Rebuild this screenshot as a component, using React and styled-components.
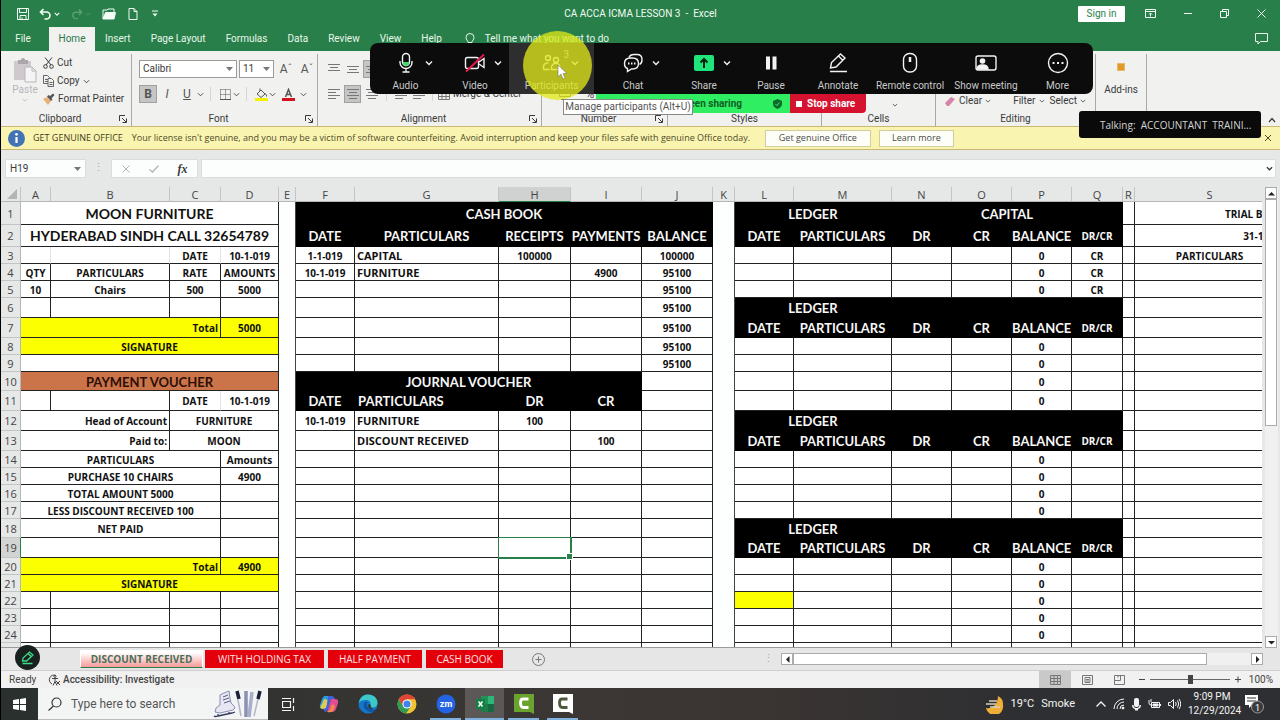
import React from 'react';
import styled, { createGlobalStyle, css } from 'styled-components';

const GlobalStyle = createGlobalStyle`
  * {
    box-sizing: border-box;
  }
  body {
    margin: 0;
    background: #000;
    overflow: hidden;
  }
  button, input, select {
    font: inherit;
    color: inherit;
    margin: 0;
    padding: 0;
    border: 0;
    background: none;
    border-radius: 0;
    outline: none;
  }
`;

const ui = "Roboto, 'Open Sans', sans-serif";
const wideUi = "'Open Sans', 'Noto Sans', sans-serif";

const Screen = styled.div`
  position: relative;
  display: flex;
  flex-direction: column;
  height: 100vh;
  padding-left: 1px;
  font-family: ${ui};
  font-size: 10px;
  line-height: 14px;
  color: #3a3a3a;
  overflow: hidden;
  white-space: nowrap;
`;

const Icon = styled.svg`
  display: block;
  flex: none;
  fill: none;
  stroke: ${p => p.stroke || 'currentColor'};
  stroke-width: ${p => p.$stroke || 1};
`;

/* title bar */

const TitleBar = styled.header`
  display: grid;
  grid-template-columns: 1fr auto 1fr;
  align-items: center;
  height: 27px;
  background: #287f49;
  color: #f2fbf4;
`;

const QuickAccess = styled.div`
  display: flex;
  align-items: center;
  padding-left: 15px;
`;

const QuickButton = styled.button`
  display: flex;
  align-items: center;
  justify-content: center;
  gap: 2px;
  width: ${p => p.$w}px;
  opacity: ${p => (p.$faint ? 0.25 : 1)};
`;

const WindowButtons = styled.div`
  display: flex;
  align-items: center;
  justify-content: flex-end;
`;

const SignIn = styled.button`
  width: 47px;
  height: 16px;
  margin-right: 7px;
  background: #fff;
  color: #287f49;
  border-radius: 1px;
`;

const WindowButton = styled.button`
  display: flex;
  align-items: center;
  justify-content: center;
  width: 37px;
  height: 24px;
`;

const TabRow = styled.nav`
  display: flex;
  align-items: stretch;
  height: 24px;
  background: #287f49;
  color: #e9f7ec;
`;

const Tab = styled.button`
  padding: 0 10px;
`;

const FileTab = styled(Tab)`
  width: 48px;
  padding: 0 4px 0 0;
`;

const ActiveTab = styled(Tab)`
  width: 46px;
  padding: 0;
  background: #f1f1f0;
  color: #2b7a4b;
`;

const TellMe = styled.label`
  display: flex;
  align-items: center;
  gap: 10px;
  flex: 1;
  padding-left: 13px;
`;

/* ribbon */

const Ribbon = styled.div`
  display: flex;
  height: 75px;
  padding-top: 3px;
  background: #f1f1f0;
`;

const Group = styled.section`
  display: flex;
  flex-direction: column;
  width: ${p => p.$w}px;
  border-right: 1px solid #a9a9a9;
`;

const GroupBody = styled.div`
  flex: 1;
  display: flex;
  min-height: 0;
`;

const GroupFoot = styled.div`
  display: flex;
  align-items: center;
  height: 14px;
  span {
    flex: 1;
    text-align: center;
  }
`;

const Launcher = styled.button`
  width: 12px;
  display: flex;
`;

const PasteButton = styled.button`
  display: flex;
  flex: none;
  flex-direction: column;
  align-items: center;
  width: 42px;
  padding: 3px 0 0 6px;
  color: #b9b5b8;
`;

const Stack = styled.div`
  display: flex;
  flex-direction: column;
  gap: 4px;
  padding-top: 2px;
`;

const LineButton = styled.button`
  display: flex;
  align-items: center;
  gap: 3px;
  height: 14px;
`;

const ToolRows = styled.div`
  display: flex;
  flex-direction: column;
  gap: 7px;
  padding: 6px 0 0 7px;
`;

const ToolRow = styled.div`
  display: flex;
  align-items: center;
  height: 18px;
  gap: ${p => p.$gap || 0}px;
`;

const SelectBox = styled.label`
  position: relative;
  display: flex;
  align-items: center;
  width: ${p => p.$w}px;
  height: 18px;
  background: #fff;
  border: 1px solid #9b9b9b;
  select {
    appearance: none;
    width: 100%;
    padding-left: 3px;
  }
  svg {
    position: absolute;
    right: 3px;
    pointer-events: none;
  }
`;

const Tool = styled.button`
  display: flex;
  align-items: center;
  justify-content: center;
  width: ${p => p.$w || 16}px;
  height: 18px;
  font-size: 12px;
  color: #555;
  ${p => p.$on && css`
    background: #c5c5c5;
    border: 1px solid #a0a0a0;
  `}
`;

const ToolDivider = styled.span`
  width: 1px;
  height: 14px;
  margin: 0 ${p => p.$m || 6}px;
  background: #d5d5d5;
`;

const LowRow = styled.div`
  display: flex;
  align-items: flex-end;
  justify-content: ${p => p.$justify || 'center'};
  gap: ${p => p.$gap || 8}px;
  width: 100%;
  padding: 0 ${p => p.$pad || 0}px 4px;
`;

const AddIns = styled.button`
  display: flex;
  flex-direction: column;
  align-items: center;
  width: 100%;
  gap: 12px;
  padding-top: 9px;
`;

const AddInMark = styled.span`
  width: 8px;
  height: 8px;
  background: #e09a2c;
  border: 1px solid #eab968;
`;

const CollapseRibbon = styled.button`
  margin: auto 4px 3px auto;
`;

/* message bar */

const MessageBar = styled.div`
  display: flex;
  align-items: center;
  height: 24px;
  padding: 0 8px 0 7px;
  background: #f9f4b0;
  border-top: 1px solid #c9b873;
  border-bottom: 1px solid #c9b873;
  color: #4f4b28;
  font-family: ${wideUi};
  font-size: 9px;
  strong {
    font-weight: 400;
    margin: 0 9px 0 8px;
    color: #3f3c20;
  }
  p {
    width: 625px;
    margin: 0;
  }
`;

const MessageButton = styled.button`
  width: ${p => p.$w}px;
  height: 17px;
  margin-left: 8px;
  background: #fefef8;
  border: 1px solid #d2cd9d;
  color: #4a4a4a;
`;

const CloseMessage = styled.button`
  margin-left: auto;
`;

/* formula bar */

const FormulaBar = styled.div`
  display: flex;
  align-items: flex-start;
  height: 37px;
  padding: 9px 4px 0 4px;
  background: #e6e7e7;
`;

const NameBox = styled.label`
  display: flex;
  align-items: center;
  width: 81px;
  height: 19px;
  background: #fcfdfd;
  border: 1px solid #dcdcdc;
  input {
    width: 60px;
    padding-left: 4px;
  }
  svg {
    margin-left: auto;
    margin-right: 4px;
  }
`;

const Dots = styled.span`
  width: 25px;
  text-align: center;
  font-size: 11px;
  line-height: 18px;
  color: #aaa;
`;

const FormulaTools = styled.div`
  display: flex;
  align-items: center;
  justify-content: space-around;
  width: 87px;
  height: 19px;
  background: #fcfdfd;
  border: 1px solid #dcdcdc;
`;

const FormulaField = styled.label`
  flex: 1;
  display: flex;
  align-items: center;
  height: 19px;
  margin-left: 3px;
  padding-right: 2px;
  background: #fcfdfd;
  border: 1px solid #dcdcdc;
  input {
    flex: 1;
  }
`;

const FxButton = styled.button`
  font-family: 'Liberation Serif', serif;
  font-style: italic;
  font-weight: 700;
  font-size: 12px;
`;

/* sheet */

const SheetArea = styled.div`
  flex: 1;
  display: flex;
  min-height: 0;
  background: #e6e7e7;
`;

const SheetView = styled.div`
  flex: 1;
  min-width: 0;
  overflow: hidden;
  border-bottom: 1px solid #9a9a9a;
`;

const Sheet = styled.table`
  table-layout: fixed;
  width: 0;
  border-collapse: separate;
  border-spacing: 0;
  background: #fff;
  font-family: ${wideUi};
  font-size: 10px;
  line-height: 14px;
  font-weight: 700;
  color: #111;
`;

const ColumnHead = styled.th`
  height: 15px;
  padding: 0;
  line-height: 13px;
  font-weight: 400;
  font-size: 11px;
  color: #444;
  background: ${p => (p.$active ? '#cfd2d0' : '#e6e7e7')};
  border-right: 1px solid #c3c4c4;
  border-bottom: 1px solid ${p => (p.$active ? '#287f49' : '#b5b6b6')};
`;

const RowHead = styled.th`
  padding: 1px 0 0;
  font-weight: 400;
  font-size: 11px;
  color: #444;
  background: ${p => (p.$active ? '#d2d4d3' : '#e6e7e7')};
  border-right: 1px solid ${p => (p.$active ? '#287f49' : '#b5b6b6')};
  border-bottom: 1px solid #c3c4c4;
`;

const tones = {
  plain: css`background: #fff;`,
  black: css`background: #000; color: #f7f7f7; border-color: #000;`,
  yellow: css`background: #fbff00;`,
  clay: css`background: #cb744a; color: #2b0f06;`,
};

const sizes = { title: 14, head: 13, mid: 11, small: 10 };

const Cell = styled.td`
  position: relative;
  padding: 1px ${p => (p.$pad === undefined ? 2 : p.$pad)}px 0;
  text-align: ${p => p.$align || 'center'};
  font-family: ${p => (p.$size === 'title' || p.$size === 'head' ? "Lato, 'Open Sans', sans-serif" : 'inherit')};
  font-size: ${p => sizes[p.$size || 'small']}px;
  border-right: 1px solid ${p => (p.$soft ? '#e3e3e3' : '#222')};
  border-bottom: 1px solid #222;
  ${p => tones[p.$tone || 'plain']}
  ${p => p.$selected && css`
    z-index: 1;
    outline: 1px solid #287f49;
    border-color: #287f49;
    &::after {
      content: '';
      position: absolute;
      right: -3px;
      bottom: -3px;
      width: 5px;
      height: 5px;
      background: #287f49;
      border: 1px solid #fff;
    }
  `}
`;

const GapCell = styled.td`
  padding: 0;
  background: #fdfefe;
  border-right: 1px solid #444;
`;

const ScrollColumn = styled.div`
  display: flex;
  flex-direction: column;
  width: 13px;
  margin: 0 2px 0 3px;
  background: #f0f0f0;
`;

const ArrowButton = styled.button`
  display: flex;
  align-items: center;
  justify-content: center;
  width: 12px;
  height: 12px;
  background: #fff;
  border: 1px solid #ababab;
`;

const VerticalThumb = styled.div`
  width: 12px;
  height: 227px;
  background: #fff;
  border: 1px solid #ababab;
`;

const Spacer = styled.span`
  flex: 1;
`;

/* sheet tabs */

const TabStrip = styled.div`
  display: flex;
  align-items: center;
  height: 23px;
  padding: 0 17px 0 79px;
  background: #e6e6e6;
  border-bottom: 1px solid #cfcfcf;
`;

const SheetTab = styled.button`
  height: 18px;
  width: ${p => p.$w}px;
  margin-right: 4px;
  font-family: ${wideUi};
  background: #e3000b;
  color: #ffe1e1;
  ${p => p.$active && css`
    margin-right: 2px;
    font-weight: 700;
    color: #4b7057;
    background: linear-gradient(#fff 10%, #f79a9a);
    border: 1px solid #fff;
    border-bottom: 1px solid #287f49;
  `}
`;

const AddSheet = styled.button`
  margin-left: 25px;
`;

const HorizontalScroll = styled.div`
  display: flex;
  width: 482px;
  background: #f0f0f0;
`;

const HorizontalThumb = styled.div`
  width: 414px;
  height: 12px;
  background: #fff;
  border: 1px solid #ababab;
`;

/* status bar */

const StatusBar = styled.div`
  display: flex;
  align-items: center;
  height: 17px;
  padding: 0 7px 0 8px;
  background: #f1f1f1;
  color: #444;
  b {
    margin-left: 2px;
    font-weight: 500;
  }
`;

const Ready = styled.span`
  width: 39px;
`;

const ViewButton = styled.button`
  display: flex;
  align-items: center;
  justify-content: center;
  width: 32px;
  height: 17px;
  background: ${p => (p.$on ? '#c9c9c9' : 'none')};
`;

const ZoomSlider = styled.input`
  appearance: none;
  width: 80px;
  height: 12px;
  margin: 0 4px;
  background: linear-gradient(#666, #666) center / 100% 1px no-repeat;
  &::-webkit-slider-thumb {
    appearance: none;
    width: 5px;
    height: 9px;
    background: #444;
  }
`;

const Percent = styled.span`
  width: 32px;
  text-align: right;
`;

/* task bar */

const TaskBar = styled.footer`
  display: flex;
  align-items: stretch;
  height: 32px;
  background: linear-gradient(90deg, #2a302d, #3c3735 45%, #3a3432 60%, #2e2f32 80%);
  color: #f4f4f4;
`;

const StartButton = styled.button`
  display: flex;
  align-items: center;
  justify-content: center;
  width: 37px;
`;

const SearchBox = styled.label`
  display: flex;
  align-items: center;
  width: 230px;
  padding-left: 10px;
  background: #f3f4f4;
  border-bottom: 1px solid #bbb;
  color: #333;
  input {
    width: 142px;
    margin-left: 9px;
    font-size: 12px;
    &::placeholder {
      color: #555;
    }
  }
`;

const TaskButton = styled.button`
  position: relative;
  display: flex;
  align-items: center;
  justify-content: center;
  width: ${p => p.$w || 39}px;
  background: ${p => (p.$active ? '#5b5857' : 'none')};
  ${p => p.$open && css`
    &::after {
      content: '';
      position: absolute;
      bottom: 0;
      left: ${p.$active ? 0 : 4}px;
      right: ${p.$active ? 0 : 4}px;
      height: 2px;
      background: #7fb1de;
    }
  `}
`;

const Weather = styled.div`
  display: flex;
  align-items: center;
  gap: 7px;
  margin-left: auto;
  margin-right: 21px;
  font-size: 11px;
`;

const Tray = styled.div`
  display: flex;
  align-items: center;
  gap: 7px;
`;

const Clock = styled.div`
  width: 48px;
  text-align: center;
`;

const Notifications = styled.button`
  display: flex;
  align-items: center;
  margin: 0 16px 0 8px;
`;

/* meeting overlays */

const MeetingBar = styled.div`
  position: absolute;
  top: 43px;
  left: 370px;
  display: grid;
  grid-template-columns: 71px 68px 85px 78px 64px 70px 64px 80px 72px 71px;
  height: 51px;
  background: #0c0c0c;
  border-radius: 8px;
  overflow: hidden;
  z-index: 3;
`;

const MeetingButton = styled.button`
  position: relative;
  display: flex;
  flex-direction: column;
  align-items: center;
  gap: 4px;
  padding-top: 8px;
  color: #c9c9c9;
  background: ${p => (p.$hover ? '#2e2e2e' : 'none')};
`;

const MeetingIcon = styled.span`
  display: grid;
  grid-template-columns: 1fr auto 1fr;
  align-items: center;
  width: 100%;
  height: 24px;
  color: #f3f3f3;
  > :first-child {
    grid-column: 2;
  }
  > :nth-child(2) {
    margin-left: 7px;
  }
`;

const Count = styled.span`
  position: absolute;
  top: 5px;
  right: 25px;
`;

const Spotlight = styled.div`
  position: absolute;
  top: 31px;
  left: 523px;
  width: 69px;
  height: 69px;
  border-radius: 50%;
  background: rgba(225, 233, 24, 0.76);
  z-index: 4;
`;

const Pointer = styled.svg`
  position: absolute;
  top: 64px;
  left: 557px;
  z-index: 6;
`;

const Tooltip = styled.div`
  position: absolute;
  top: 99px;
  left: 563px;
  width: 130px;
  height: 16px;
  text-align: center;
  background: #fff;
  border: 1px solid #888;
  color: #555;
  z-index: 5;
`;

const ShareStatus = styled.div`
  position: absolute;
  top: 94px;
  left: 596px;
  display: flex;
  width: 270px;
  height: 19px;
  font-weight: 700;
  z-index: 2;
`;

const SharingLabel = styled.div`
  flex: 1;
  display: flex;
  align-items: center;
  justify-content: flex-end;
  gap: 31px;
  padding-right: 8px;
  background: #2fee62;
  color: #0e5f26;
`;

const StopShare = styled.button`
  display: flex;
  align-items: center;
  gap: 5px;
  width: 76px;
  padding-left: 6px;
  background: #d5122f;
  color: #fff;
  border-radius: 0 0 4px 0;
  &::before {
    content: '';
    width: 6px;
    height: 6px;
    background: #fff;
  }
`;

const Talking = styled.div`
  position: absolute;
  top: 111px;
  right: 19px;
  width: 182px;
  height: 27px;
  padding-left: 21px;
  line-height: 28px;
  background: #0a0a0a;
  border-radius: 3px;
  color: #d4d4d4;
  font-family: ${wideUi};
  z-index: 3;
`;

const PenBubble = styled.button`
  position: absolute;
  left: 15px;
  bottom: 50px;
  display: flex;
  align-items: center;
  justify-content: center;
  width: 25px;
  height: 25px;
  border-radius: 50%;
  background: #18211d;
  color: #3ddb88;
  z-index: 3;
`;

const Chevron = ({ size = 7, stroke = 1 }) => (
  <Icon width={size} height={size} viewBox="0 0 8 8" $stroke={stroke}>
    <path d="M1 2.5 4 5.5 7 2.5" />
  </Icon>
);

const Caret = () => (
  <Icon width="7" height="4" viewBox="0 0 7 4" stroke="none">
    <path d="M0 0h7L3.500 4z" fill="#777" />
  </Icon>
);

const arrowPaths = {
  up: 'M0 5.500h7L3.500 2z',
  down: 'M0 2h7L3.500 5.500z',
  left: 'M5.500 0v7L2 3.500z',
  right: 'M2 0v7L5.500 3.500z',
};

const Arrow = ({ to }) => (
  <ArrowButton aria-label={`Scroll ${to}`}>
    <Icon width="7" height="7" viewBox="0 0 7 7" stroke="none">
      <path d={arrowPaths[to]} fill="#222" />
    </Icon>
  </ArrowButton>
);

const LauncherIcon = () => (
  <Launcher aria-label="More options">
    <Icon width="8" height="8" viewBox="0 0 8 8">
      <path d="M.5 6V.5H6M3 3l4 4M7.500 3.500v4h-4" />
    </Icon>
  </Launcher>
);

const Lines = ({ widths = [12, 8, 12, 8], center, short }) => (
  <Icon width="12" height="12" viewBox="0 0 12 12" stroke="#777">
    {widths.map((w, i) => {
      const x = center ? (12 - w) / 2 : 0;
      return <path key={i} d={`M${x} ${(short ? 3.5 : 1.5) + i * 3}h${w}`} />;
    })}
  </Icon>
);

/* sheet data: [text, options] per cell, "span" merges columns */

const columns = [
  ['A', 30], ['B', 119], ['C', 51], ['D', 58], ['E', 17], ['F', 59], ['G', 144], ['H', 72], ['I', 71],
  ['J', 71], ['K', 22], ['L', 59], ['M', 98], ['N', 60], ['O', 60], ['P', 60], ['Q', 51], ['R', 12],
  ['S', 150], ['T', 108],
];

const heights = [23, 22, 17, 17, 17, 20, 20, 17, 17, 19, 20, 20, 20, 17, 17, 17, 17, 19, 20, 17, 17, 17, 17, 17, 17];

const blanks = (n, options) => Array.from({ length: n }, () => ['', options]);
const soft = { soft: true };
const yellow = { tone: 'yellow' };
const head = { tone: 'black', size: 'head', pad: 0 };
const leftText = { align: 'left', size: 'mid' };

const voucher = {
  1: [['MOON FURNITURE', { span: 4, size: 'title' }]],
  2: [['HYDERABAD SINDH CALL 32654789', { span: 4, size: 'title', pad: 0 }]],
  3: [['', soft], ['', soft], ['DATE', soft], ['10-1-019']],
  4: [['QTY'], ['PARTICULARS'], ['RATE'], ['AMOUNTS', { pad: 0 }]],
  5: [['10'], ['Chairs'], ['500'], ['5000']],
  7: [['Total', { ...yellow, span: 3, align: 'right' }], ['5000', yellow]],
  8: [['SIGNATURE', { ...yellow, span: 4 }]],
  9: [['', { span: 4 }]],
  10: [['PAYMENT VOUCHER', { tone: 'clay', span: 4, size: 'head' }]],
  11: [[''], [''], ['DATE', soft], ['10-1-019']],
  12: [['Head of Account', { span: 2, align: 'right' }], ['FURNITURE', { span: 2 }]],
  13: [['Paid to:', { span: 2, align: 'right' }], ['MOON', { span: 2 }]],
  14: [['PARTICULARS', { span: 3 }], ['Amounts']],
  15: [['PURCHASE 10 CHAIRS', { span: 3 }], ['4900']],
  16: [['TOTAL AMOUNT 5000', { span: 3 }], ['']],
  17: [['LESS DISCOUNT RECEIVED 100', { span: 3 }], ['']],
  18: [['NET PAID', { span: 3 }], ['']],
  19: [['', { span: 3 }], ['']],
  20: [['Total', { ...yellow, span: 3, align: 'right' }], ['4900', yellow]],
  21: [['SIGNATURE', { ...yellow, span: 4 }]],
};

const cashBook = {
  1: [['CASH BOOK', { ...head, span: 5 }]],
  2: [['DATE', head], ['PARTICULARS', head], ['RECEIPTS', head], ['PAYMENTS', head], ['BALANCE', head]],
  3: [['1-1-019'], ['CAPITAL', leftText], ['100000'], [''], ['100000']],
  4: [['10-1-019'], ['FURNITURE', leftText], [''], ['4900'], ['95100']],
  10: [['JOURNAL VOUCHER', { ...head, span: 4 }], ['']],
  11: [['DATE', head], ['PARTICULARS', { ...head, align: 'left', pad: 3 }], ['DR', head], ['CR', head], ['']],
  12: [['10-1-019'], ['FURNITURE', leftText], ['100'], [''], ['']],
  13: [[''], ['DISCOUNT RECEIVED', leftText], [''], ['100'], ['']],
  19: [[''], [''], ['', { selected: true }], [''], ['']],
};
[5, 6, 7, 8, 9].forEach(n => {
  cashBook[n] = [...blanks(4), ['95100']];
});

const ledgerHead = [
  ['DATE', head], ['PARTICULARS', head], ['DR', head], ['CR', head], ['BALANCE', head],
  ['DR/CR', { tone: 'black' }],
];

const ledger = { 1: [['LEDGER', { ...head, span: 2 }], ['CAPITAL', { ...head, span: 4 }]], 2: ledgerHead };
[3, 4, 5].forEach(n => {
  ledger[n] = [...blanks(4), ['0'], ['CR']];
});
[6, 12, 18].forEach(n => {
  ledger[n] = [['LEDGER', { ...head, span: 2 }], ['', { ...head, span: 4 }]];
  ledger[n + 1] = ledgerHead;
});
ledger[22] = [['', yellow], ...blanks(3), ['0'], ['']];

const trial = {
  1: [['TRIAL BALANCE', { span: 2 }]],
  2: [['31-1-019', { span: 2 }]],
  3: [['PARTICULARS'], ['']],
};

const SheetRow = ({ n }) => {
  const draw = cells => cells.map(([text, o = {}], i) => (
    <Cell
      key={i}
      colSpan={o.span}
      $align={o.align}
      $size={o.size}
      $pad={o.pad}
      $soft={o.soft}
      $tone={o.tone}
      $selected={o.selected}
    >
      {text}
    </Cell>
  ));
  return (
    <tr style={{ height: heights[n - 1] }}>
      <RowHead scope="row" $active={n === 19}>{n < 25 ? n : ''}</RowHead>
      {draw(voucher[n] || blanks(4))}
      <GapCell />
      {draw(cashBook[n] || blanks(5))}
      <GapCell />
      {draw(ledger[n] || [...blanks(4), [n < 25 ? '0' : ''], ['']])}
      {draw([['', { pad: 0 }]])}
      {draw(trial[n] || blanks(2))}
    </tr>
  );
};

const TitleArea = () => (
  <TitleBar>
    <QuickAccess>
      <QuickButton $w={14} aria-label="Save">
        <Icon width="12" height="12" viewBox="0 0 12 12">
          <path d="M.5.5h11v11H.5zM2.500.5v4h7v-4M3 11.500v-4h6v4M5 9.500v2" />
        </Icon>
      </QuickButton>
      <QuickButton $w={38} aria-label="Undo">
        <Icon width="13" height="12" viewBox="0 0 13 12" $stroke="1.6">
          <path d="M4.500 1 1.500 4l3 3M1.500 4h6a3.500 3.500 0 0 1 0 7h-2" />
        </Icon>
        <Chevron size={6} stroke={1.5} />
      </QuickButton>
      <QuickButton $w={26} $faint aria-label="Redo">
        <Icon width="12" height="12" viewBox="0 0 13 12" $stroke="1.6">
          <path d="M8.500 1l3 3-3 3M11.500 4h-6a3.500 3.500 0 0 0 0 7h2" />
        </Icon>
        <Chevron size={6} />
      </QuickButton>
      <QuickButton $w={30} aria-label="Open">
        <Icon width="14" height="12" viewBox="0 0 14 12">
          <path d="M1 11V2h4l1-1h6v3" />
          <path d="M1 11 3.500 4.500H13.500L12 11z" fill="currentColor" />
        </Icon>
      </QuickButton>
      <QuickButton $w={18} aria-label="New">
        <Icon width="10" height="12" viewBox="0 0 10 12">
          <path d="M1 .5h5l3 3v8H1zM6 .5v3h3" />
        </Icon>
      </QuickButton>
      <QuickButton $w={26} aria-label="Customize">
        <Icon width="6" height="7" viewBox="0 0 6 7">
          <path d="M0 1h6" />
          <path d="M.5 3.500h5L3 6.500z" fill="currentColor" stroke="none" />
        </Icon>
      </QuickButton>
    </QuickAccess>
    <span>CA ACCA ICMA LESSON 3&nbsp; -&nbsp; Excel</span>
    <WindowButtons>
      <SignIn>Sign in</SignIn>
      <WindowButton aria-label="Ribbon display">
        <Icon width="11" height="9" viewBox="0 0 11 9">
          <path d="M.5.5h10v8H.5zM.5 2.500h10M5.500 7.500v-3.500M4 5.500 5.500 4 7 5.500" />
        </Icon>
      </WindowButton>
      <WindowButton aria-label="Minimize">
        <Icon width="8" height="9" viewBox="0 0 8 9"><path d="M0 4.500h8" /></Icon>
      </WindowButton>
      <WindowButton aria-label="Restore">
        <Icon width="9" height="9" viewBox="0 0 9 9"><path d="M.5 2.500h6v6h-6zM2.500 2.500v-2h6v6h-2" /></Icon>
      </WindowButton>
      <WindowButton aria-label="Close">
        <Icon width="9" height="9" viewBox="0 0 9 9"><path d="M.5.5l8 8M8.500.5l-8 8" /></Icon>
      </WindowButton>
    </WindowButtons>
  </TitleBar>
);

const tabNames = ['Insert', 'Page Layout', 'Formulas', 'Data', 'Review', 'View', 'Help'];

const RibbonTabs = () => (
  <TabRow>
    <FileTab>File</FileTab>
    <ActiveTab>Home</ActiveTab>
    {tabNames.map(name => <Tab key={name}>{name}</Tab>)}
    <TellMe>
      <Icon width="10" height="13" viewBox="0 0 10 13">
        <path d="M3 9.500C3 7.500 1 7 1 4.500a4 4 0 0 1 8 0C9 7 7 7.500 7 9.500zM3.500 11.500h3" />
      </Icon>
      <span>Tell me what you want to do</span>
    </TellMe>
    <WindowButton aria-label="Comments">
      <Icon width="13" height="12" viewBox="0 0 13 12">
        <path d="M.5.5h12v8H5.500L3 11V8.500H.5z" />
      </Icon>
    </WindowButton>
  </TabRow>
);

const HomeRibbon = () => (
  <Ribbon>
    <Group $w={131}>
      <GroupBody>
        <PasteButton>
          <Icon width="24" height="26" viewBox="0 0 24 26" stroke="none">
            <path d="M1 4h17v19H1z" fill="#cfc9cd" />
            <path d="M5 3h3a2 2 0 0 1 4 0h3v4H5z" fill="#aaa6a9" />
            <path d="M12 10h7l4 4v11H12zM19 10v4h4" fill="#f5f3f5" stroke="#b9b5b8" />
          </Icon>
          <span>Paste</span>
          <Chevron size={6} />
        </PasteButton>
        <Stack>
          <LineButton>
            <Icon width="11" height="12" viewBox="0 0 11 12">
              <path d="M2 .5 8 8M9 .5 3 8" />
              <circle cx="2.500" cy="9.500" r="1.800" />
              <circle cx="8.500" cy="9.500" r="1.800" />
            </Icon>
            Cut
          </LineButton>
          <LineButton>
            <Icon width="11" height="12" viewBox="0 0 11 12" stroke="#666">
              <path d="M.5.5h4l2 2v6h-6zM2 4.500h3M2 6.500h3" />
              <path d="M5 3.500h3.500l2 2v6H5zM6.500 7.500h3M6.500 9.500h3" fill="#f1f1f0" />
            </Icon>
            Copy
            <Chevron />
          </LineButton>
          <LineButton>
            <Icon width="12" height="12" viewBox="0 0 12 12" stroke="none">
              <path d="M0 6 4 4l4 4-3 4z" fill="#e6b277" />
              <path d="M4 3.500 8 8l1.500-1.500-1-1L11.500 2 10 .5 7 3 5.500 2z" fill="#555" />
            </Icon>
            Format Painter
          </LineButton>
        </Stack>
      </GroupBody>
      <GroupFoot><span>Clipboard</span><LauncherIcon /></GroupFoot>
    </Group>

    <Group $w={186}>
      <GroupBody>
        <ToolRows>
          <ToolRow $gap={2}>
            <SelectBox $w={98}>
              <select aria-label="Font" defaultValue="Calibri"><option>Calibri</option></select>
              <Caret />
            </SelectBox>
            <SelectBox $w={35}>
              <select aria-label="Font size" defaultValue="11"><option>11</option></select>
              <Caret />
            </SelectBox>
            <Tool $w={20} aria-label="Increase font size">A<sup>ˆ</sup></Tool>
            <Tool $w={18} aria-label="Decrease font size">A<sup>ˇ</sup></Tool>
          </ToolRow>
          <ToolRow>
            <Tool $w={18} $on><b>B</b></Tool>
            <Tool $w={20}><i>I</i></Tool>
            <Tool $w={20}><u>U</u></Tool>
            <Chevron />
            <ToolDivider />
            <Tool aria-label="Borders">
              <Icon width="11" height="11" viewBox="0 0 11 11">
                <path d="M.5.5h10M.5.5v10M10.500.5v10M5.500.5v10M.5 5.500h10" strokeDasharray="1 1" />
                <path d="M0 10.500h11" />
              </Icon>
            </Tool>
            <Chevron />
            <ToolDivider />
            <Tool aria-label="Fill color">
              <Icon width="13" height="13" viewBox="0 0 13 13">
                <path d="M0 10h13v3H0z" fill="#f5f000" stroke="none" />
                <path d="M2 6l4-4 4 4-4 3.500zM5 3V.5M10 5.500q2 1 1.500 3" />
              </Icon>
            </Tool>
            <Chevron />
            <Tool $w={24} aria-label="Font color">
              <Icon width="13" height="13" viewBox="0 0 13 13">
                <path d="M0 10h13v3H0z" fill="#d4121f" stroke="none" />
                <path d="M3.500 9 6.500 1.500 9.500 9M4.500 6.500h4" strokeWidth="1.500" />
              </Icon>
            </Tool>
            <Chevron />
          </ToolRow>
        </ToolRows>
      </GroupBody>
      <GroupFoot><span>Font</span><LauncherIcon /></GroupFoot>
    </Group>

    <Group $w={224}>
      <GroupBody>
        <ToolRows>
          <ToolRow $gap={2}>
            <Tool $w={17} aria-label="Top align"><Lines widths={[12, 8, 12]} center /></Tool>
            <Tool $w={17} aria-label="Middle align"><Lines widths={[12, 8, 12]} center short /></Tool>
            <Tool $w={17} $on aria-label="Bottom align"><Lines widths={[12, 8, 12]} center short /></Tool>
          </ToolRow>
          <ToolRow $gap={2}>
            <Tool $w={17} aria-label="Align left"><Lines /></Tool>
            <Tool $w={17} $on aria-label="Center"><Lines center /></Tool>
            <Tool $w={17} aria-label="Align right"><Lines center /></Tool>
            <ToolDivider $m={4} />
            <Tool $w={16} aria-label="Decrease indent"><Lines /></Tool>
            <Tool $w={16} aria-label="Increase indent"><Lines /></Tool>
            <ToolDivider $m={3} />
            <LineButton>
              <Icon width="12" height="12" viewBox="0 0 12 12" stroke="#777">
                <path d="M.5.5h11v11H.5zM.5 8.500h11M4 .5v11M8 .5v11" />
              </Icon>
              Merge &amp; Center
            </LineButton>
          </ToolRow>
        </ToolRows>
      </GroupBody>
      <GroupFoot><span>Alignment</span><LauncherIcon /></GroupFoot>
    </Group>

    <Group $w={126}>
      <GroupBody>
        <ToolRows>
          <ToolRow />
          <ToolRow>
            <Tool $w={32} aria-label="Accounting format">
              <Icon width="12" height="12" viewBox="0 0 12 12">
                <path d="M.5 2.500h11v6H.5zM2 11.500h8" />
              </Icon>
            </Tool>
            <Tool $w={18}>%</Tool>
          </ToolRow>
        </ToolRows>
      </GroupBody>
      <GroupFoot><span>Number</span><LauncherIcon /></GroupFoot>
    </Group>

    <Group $w={154}>
      <GroupBody />
      <GroupFoot><span>Styles</span></GroupFoot>
    </Group>

    <Group $w={114}>
      <GroupBody>
        <LowRow $gap={27}><Chevron size={6} /><Chevron size={6} /></LowRow>
      </GroupBody>
      <GroupFoot><span>Cells</span></GroupFoot>
    </Group>

    <Group $w={160}>
      <GroupBody>
        <LowRow $justify="flex-start" $pad={9} $gap={5}>
          <LineButton>
            <Icon width="11" height="9" viewBox="0 0 11 9" stroke="none">
              <path d="M0 6 6 0l4 2-6 7H2z" fill="#d884a8" />
            </Icon>
            Clear <Chevron size={6} />
          </LineButton>
          <Spacer />
          <LineButton>Filter <Chevron size={6} /></LineButton>
          <LineButton>Select <Chevron size={6} /></LineButton>
        </LowRow>
      </GroupBody>
      <GroupFoot><span>Editing</span></GroupFoot>
    </Group>

    <Group $w={51}>
      <GroupBody>
        <AddIns><AddInMark />Add-ins</AddIns>
      </GroupBody>
    </Group>
    <CollapseRibbon aria-label="Collapse ribbon">
      <Icon width="8" height="6" viewBox="0 0 8 6" $stroke="1.2"><path d="M1 5l3-3.500L7 5" /></Icon>
    </CollapseRibbon>
  </Ribbon>
);

const LicenseMessage = () => (
  <MessageBar>
    <Icon width="17" height="17" viewBox="0 0 17 17">
      <circle cx="8.500" cy="8.500" r="8.500" fill="#4273b5" stroke="none" />
      <path d="M8.500 7v6" stroke="#fff" strokeWidth="2.200" />
      <circle cx="8.500" cy="4.300" r="1.400" fill="#fff" stroke="none" />
    </Icon>
    <strong>GET GENUINE OFFICE</strong>
    <p>
      Your license isn&apos;t genuine, and you may be a victim of software counterfeiting. Avoid interruption
      and keep your files safe with genuine Office today.
    </p>
    <MessageButton $w={106}>Get genuine Office</MessageButton>
    <MessageButton $w={75}>Learn more</MessageButton>
    <CloseMessage aria-label="Close message">
      <Icon width="8" height="8" viewBox="0 0 8 8"><path d="M1 1l6 6M7 1 1 7" /></Icon>
    </CloseMessage>
  </MessageBar>
);

const FormulaArea = () => (
  <FormulaBar>
    <NameBox>
      <input aria-label="Name box" defaultValue="H19" />
      <Caret />
    </NameBox>
    <Dots>⋮</Dots>
    <FormulaTools>
      <button aria-label="Cancel">
        <Icon width="8" height="8" viewBox="0 0 8 8" stroke="#b5b5b5"><path d="M.5.5l7 7M7.500.5l-7 7" /></Icon>
      </button>
      <button aria-label="Enter">
        <Icon width="10" height="8" viewBox="0 0 10 8" $stroke="1.3" stroke="#b5b5b5"><path d="M.5 4.500 3.500 7l6-6.500" /></Icon>
      </button>
      <FxButton>fx</FxButton>
    </FormulaTools>
    <FormulaField>
      <input aria-label="Formula bar" />
      <Chevron stroke={1.5} />
    </FormulaField>
  </FormulaBar>
);

const Workbook = () => (
  <SheetArea>
    <SheetView>
      <Sheet>
        <colgroup>
          <col style={{ width: 20 }} />
          {columns.map(([name, width]) => <col key={name} style={{ width }} />)}
        </colgroup>
        <thead>
          <tr>
            <ColumnHead scope="col">
              <Icon width="18" height="12" viewBox="0 0 18 12" stroke="none">
                <path d="M16 1v10H6z" fill="#b3b4b4" />
              </Icon>
            </ColumnHead>
            {columns.map(([name]) => <ColumnHead key={name} scope="col" $active={name === 'H'}>{name}</ColumnHead>)}
          </tr>
        </thead>
        <tbody>
          {heights.map((_, i) => <SheetRow key={i} n={i + 1} />)}
        </tbody>
      </Sheet>
    </SheetView>
    <ScrollColumn>
      <Arrow to="up" />
      <VerticalThumb />
      <Spacer />
      <Arrow to="down" />
    </ScrollColumn>
  </SheetArea>
);

const SheetTabs = () => (
  <TabStrip>
    <SheetTab $w={123} $active>DISCOUNT RECEIVED</SheetTab>
    <SheetTab $w={119}>WITH HOLDING TAX</SheetTab>
    <SheetTab $w={94}>HALF PAYMENT</SheetTab>
    <SheetTab $w={77}>CASH BOOK</SheetTab>
    <AddSheet aria-label="New sheet">
      <Icon width="13" height="13" viewBox="0 0 13 13" stroke="#777">
        <circle cx="6.500" cy="6.500" r="6" />
        <path d="M3.500 6.500h6M6.500 3.500v6" />
      </Icon>
    </AddSheet>
    <Spacer />
    <Dots>⋮</Dots>
    <HorizontalScroll>
      <Arrow to="left" />
      <HorizontalThumb />
      <Spacer />
      <Arrow to="right" />
    </HorizontalScroll>
  </TabStrip>
);

const StatusLine = () => (
  <StatusBar>
    <Ready>Ready</Ready>
    <Icon width="13" height="12" viewBox="0 0 13 12">
      <path d="M8 1.500A4.500 4.500 0 1 0 4 10M4 4.500h6M7 4.500v3l-2 4M7 7.500l2 4M8 7l4 4M12 7l-4 4" />
      <circle cx="7" cy="2.500" r="1" />
    </Icon>
    <b>Accessibility: Investigate</b>
    <Spacer />
    <ViewButton $on aria-label="Normal view">
      <Icon width="11" height="10" viewBox="0 0 11 10" stroke="#777"><path d="M.5.5h10v9H.5zM.5 3.500h10M.5 6.500h10M4 .5v9M7.500.5v9" /></Icon>
    </ViewButton>
    <ViewButton aria-label="Page layout view">
      <Icon width="11" height="10" viewBox="0 0 11 10" stroke="#777"><path d="M.5.5h10v9H.5zM3 2.500h5v5H3zM4 4.500h3M4 6h3" /></Icon>
    </ViewButton>
    <ViewButton aria-label="Page break view">
      <Icon width="11" height="10" viewBox="0 0 11 10" stroke="#777"><path d="M.5.5h10v9H.5zM.5 5.500h6v-5M4 .5v2" /></Icon>
    </ViewButton>
    <Icon width="11" height="7" viewBox="0 0 11 7"><path d="M4 3.500h6" /></Icon>
    <ZoomSlider type="range" aria-label="Zoom" defaultValue="50" />
    <Icon width="7" height="7" viewBox="0 0 7 7"><path d="M1 3.500h6M4 .5v6" /></Icon>
    <Percent>100%</Percent>
  </StatusBar>
);

const Camtasia = ({ back, front }) => (
  <Icon width="20" height="20" viewBox="0 0 20 20">
    <path d="M0 0h20v20l-4-2H0z" fill={back} stroke="none" />
    <path d="M14.500 5H9Q6.500 5 6.500 9t2.500 4.500h5.500" stroke={front} strokeWidth="2.800" />
  </Icon>
);

const WindowsTaskBar = () => (
  <TaskBar>
    <StartButton aria-label="Start">
      <Icon width="13" height="13" viewBox="0 0 13 13" stroke="none">
        <path d="M0 2l6-1v5H0zM7 1l6-1v6H7zM0 7h6v5l-6-1zM7 7h6v6l-6-1z" fill="#fff" />
      </Icon>
    </StartButton>
    <SearchBox>
      <Icon width="14" height="14" viewBox="0 0 14 14" $stroke="1.2">
        <circle cx="8.500" cy="5.500" r="4.500" />
        <path d="M5.500 9 .5 13.500" />
      </Icon>
      <input placeholder="Type here to search" aria-label="Search" />
      <Icon width="50" height="28" viewBox="0 0 50 28">
        <path d="M7 5 11 3l5-2 1 7 1 5 3 3 1 2-2 2-13 3-5-1 1-4 4-3z" fill="#e6e7f3" stroke="#8b8fb0" />
        <path d="M1 26q1 1 4 0l14-3 3-1M5 24v2M16 22v2" stroke="#33385e" strokeWidth="1.300" />
        <path d="M10 7l5-2M10 10l6-2M11 13l6-2" stroke="#5a5f86" />
        <path d="M25 10l3 16M45 9l-4 17" stroke="#b4b6c8" strokeWidth="1.500" />
        <path d="M24 1l2 8M47 1l-2 8" stroke="#1d2038" strokeWidth="3.500" />
        <path d="M33 1v26" stroke="#8b91b5" strokeWidth="3.500" />
        <path d="M39 2l-3 25" stroke="#a9aecb" strokeWidth="3.500" />
      </Icon>
    </SearchBox>
    <TaskButton $w={41} aria-label="Task view">
      <Icon width="13" height="13" viewBox="0 0 13 13">
        <path d="M.5 3.500h8v6h-8zM0 .5h9M0 12.500h9M11.500 0v5M11.500 8v5" strokeWidth="1.200" />
      </Icon>
    </TaskButton>
    <TaskButton aria-label="Copilot">
      <Icon width="20" height="20" viewBox="0 0 20 20" stroke="none">
        <path d="M5 2h8l-4 13H4Q0 15 1 11L3 5z" fill="#2b9ce0" />
        <path d="M3 10 5 5l4 1-2 8-4 1q-3-1 0-5" fill="#e5c94b" />
        <path d="M12 5h4q4 0 3 4l-2 6q-1 3-4 3H8z" fill="#e24a94" />
        <path d="M9 2h4q2 0 3 3h-4L9 15q-1 3-3 3-1-1-2-3 3 1 4-4z" fill="#3f62d6" />
        <path d="M13 10l-2 6-3 2q4 1 6-1l2-5z" fill="#f08d42" />
      </Icon>
    </TaskButton>
    <TaskButton aria-label="Edge">
      <Icon width="20" height="20" viewBox="0 0 20 20" stroke="none">
        <circle cx="10" cy="10" r="9.500" fill="#1576c8" />
        <path d="M.7 9C2 3 6 .5 10 .5c6 0 9.500 4 9.500 8 0 3-2 5-5 5s-3-1-2-3C13 8 11 6 8 6S2 7 .7 9z" fill="#3cc7c8" />
        <path d="M7 8c-3 4 0 9 6 10 2 0 4-1 5-3-3 1-8 0-9-3-1-2 0-3 1-4z" fill="#1053a0" />
        <path d="M13 11c-1 2 0 3 2 3l-1 1c-3 0-5-3-3-5z" fill="#2f3433" />
      </Icon>
    </TaskButton>
    <TaskButton aria-label="Chrome">
      <Icon width="20" height="20" viewBox="0 0 20 20" stroke="none">
        <circle cx="10" cy="10" r="9.500" fill="#f4c430" />
        <path d="M1.800 5.200A9.500 9.500 0 0 0 9 19.500l5-7-8-1z" fill="#2d9d56" />
        <path d="M1.800 5.200A9.500 9.500 0 0 1 18.200 5.200H10L6 12z" fill="#df4437" />
        <circle cx="10" cy="10" r="4.600" fill="#fff" />
        <circle cx="10" cy="10" r="3.600" fill="#4284ee" />
      </Icon>
    </TaskButton>
    <TaskButton $open aria-label="Zoom">
      <Icon width="20" height="20" viewBox="0 0 20 20" stroke="none">
        <circle cx="10" cy="10" r="9.500" fill="#2464e4" />
        <text x="10" y="13" fill="#fff" fontSize="9" fontWeight="700" textAnchor="middle">zm</text>
      </Icon>
    </TaskButton>
    <TaskButton $open $active aria-label="Excel">
      <Icon width="20" height="18" viewBox="0 0 20 18" stroke="none">
        <path d="M6 1h13v16H6z" fill="#2fb574" />
        <path d="M6 1h7v8H6z" fill="#21915a" />
        <path d="M13 9h6v8h-6z" fill="#18693f" />
        <path d="M6 9h7v8H6z" fill="#1d7c4a" />
        <path d="M1 4h9v10H1z" fill="#128043" />
        <path d="M3.500 6.500l4 5M7.500 6.500l-4 5" stroke="#fff" strokeWidth="1.500" />
      </Icon>
    </TaskButton>
    <TaskButton $open aria-label="Camtasia"><Camtasia back="#6aa32d" front="#fff" /></TaskButton>
    <TaskButton $open aria-label="Camtasia Recorder"><Camtasia back="#fff" front="#4c5a3c" /></TaskButton>
    <Weather>
      <Icon width="19" height="19" viewBox="0 0 19 19" stroke="none">
        <path d="M13 1a9 9 0 0 1 5 9 8.500 8.500 0 0 1-17 3c6 1 12-3 12-12z" fill="#efae38" />
        <path d="M4 6h8M1 9h10M5 12h10" stroke="#d9d0bd" strokeWidth="1.500" />
      </Icon>
      <span>19°C</span>
      <span>Smoke</span>
    </Weather>
    <Tray>
      <Icon width="10" height="8" viewBox="0 0 10 8" $stroke="1.300"><path d="M.5 6.500 5 2l4.500 4.500" /></Icon>
      <Icon width="12" height="12" viewBox="0 0 12 12">
        <path d="M1 11A10 10 0 0 1 11 1M4 11a7 7 0 0 1 7-7M7 11a4 4 0 0 1 4-4" />
        <circle cx="10" cy="10" r="1" fill="currentColor" />
      </Icon>
      <Icon width="9" height="13" viewBox="0 0 9 13" stroke="none">
        <rect x="2" width="5" height="9" rx="2" fill="currentColor" />
        <path d="M0 7h1.500q0 3 3 3t3-3H9q0 3.500-3 4v1.500H3V11q-3-.5-3-4z" fill="currentColor" />
      </Icon>
      <Icon width="13" height="10" viewBox="0 0 13 10">
        <path d="M3.500 3.500h8v5h-8zM12.500 5v2M1 1v3q0 2 2 2M3 0v3" />
        <path d="M5 5h5v2H5z" fill="currentColor" />
      </Icon>
      <Icon width="13" height="12" viewBox="0 0 13 12">
        <path d="M.5 4.500h2L5.500 1.500v9l-3-3h-2zM7.500 4q1.500 2 0 4M9.500 2.500q2.500 3.500 0 7M11 1q3.500 5 0 10" />
      </Icon>
      <Clock>9:09 PM<br />12/29/2024</Clock>
    </Tray>
    <Notifications aria-label="Notifications">
      <Icon width="20" height="20" viewBox="0 0 20 20" stroke="none">
        <path d="M1 1h13v10H8l-3 3v-3H1z" fill="#fff" />
        <path d="M3 4h9M3 7h9" stroke="#333" />
        <circle cx="13.500" cy="13" r="6" fill="#3a3a3c" stroke="#999" />
        <text x="13.500" y="16.500" fill="#fff" fontSize="9" textAnchor="middle">1</text>
      </Icon>
    </Notifications>
  </TaskBar>
);

const meetingItems = [
  {
    name: 'Audio', menu: true,
    icon: <><rect x="8.500" y="2.500" width="7" height="12" rx="3.500" /><path d="M6 10v1.500a6 6 0 0 0 12 0V10M12 17.500V21M8.500 21h7" /><path d="M9 11h6v1a3 3 0 0 1-6 0z" fill="#3ddb6e" stroke="none" /></>,
  },
  {
    name: 'Video', menu: true,
    icon: <><rect x="2.500" y="6.500" width="13" height="11" rx="2" /><path d="M16 11l5-3.500v9L16 13" /><path d="M3 20.500 21 3.500" stroke="#e8174b" strokeWidth="2" /></>,
  },
  {
    name: 'Participants', menu: true, hover: true,
    icon: <><circle cx="8" cy="7" r="2.500" /><circle cx="16" cy="9" r="2.500" /><path d="M3.500 18.500v-3a4 4 0 0 1 5-3.500M3.500 18.500h6M11.500 18.500v-2a4 4 0 0 1 8.500 0v2z" /></>,
  },
  {
    name: 'Chat', menu: true,
    icon: <><path d="M8 6.500Q9 3.500 13 3.500h3q5 0 5 5 0 4-2.500 5" /><path d="M3.500 12.500q0-5.500 6-5.500h2q6 0 6 5.500t-6 5.500h-1l-4 2.500v-3q-3-1-3-5z" /><path d="M7 12.500h1.500M10 12.500h1.500M13 12.500h1.500" strokeWidth="2" /></>,
  },
  {
    name: 'Share', menu: true,
    icon: <><rect x="2" y="4" width="20" height="16" rx="2" fill="#1fe67a" stroke="none" /><path d="M12 17V8.500M8.500 11.500 12 8l3.500 3.500" stroke="#07240f" strokeWidth="2" /></>,
  },
  { name: 'Pause', icon: <path d="M7 5.500h4v13H7zM13.500 5.500h4v13h-4z" fill="currentColor" stroke="none" /> },
  { name: 'Annotate', icon: <path d="M4.500 17l1-5.500L14.500 3l4.500 4-9 9zM12.500 5l4 4M4 20.500h17" /> },
  { name: 'Remote control', icon: <><rect x="5.500" y="2.500" width="13" height="18.500" rx="6" /><path d="M12 6v5" strokeWidth="2.500" /></> },
  {
    name: 'Show meeting',
    icon: <><rect x="2" y="5" width="20" height="14" rx="2" /><circle cx="8.500" cy="10" r="2.800" fill="currentColor" stroke="none" /><path d="M3 18q0-4 5.500-4t5.500 4z" fill="currentColor" /></>,
  },
  { name: 'More', icon: <><circle cx="12" cy="12" r="9.500" /><path d="M6.500 12h2M11 12h2M15.500 12h2" strokeWidth="2" /></> },
];

const MeetingOverlay = () => (
  <>
    <ShareStatus>
      <SharingLabel>
        You are screen sharing
        <Icon width="9" height="10" viewBox="0 0 9 10">
          <path d="M4.500 0 9 2v3q0 3-4.500 5Q0 8 0 5V2z" fill="#0e6b2a" stroke="none" />
          <path d="M2.500 5 4 6.500 6.500 3.500" stroke="#2fee62" />
        </Icon>
      </SharingLabel>
      <StopShare>Stop share</StopShare>
    </ShareStatus>
    <MeetingBar>
      {meetingItems.map(({ name, icon, menu, hover }) => (
        <MeetingButton key={name} $hover={hover}>
          <MeetingIcon>
            <Icon width="24" height="24" viewBox="0 0 24 24" $stroke="1.4">{icon}</Icon>
            {menu && <Chevron size={8} stroke={1.4} />}
          </MeetingIcon>
          {hover && <Count>3</Count>}
          {name}
        </MeetingButton>
      ))}
    </MeetingBar>
    <Spotlight />
    <Tooltip>Manage participants (Alt+U)</Tooltip>
    <Pointer width="11" height="16" viewBox="0 0 11 16">
      <path d="M1 1v12l3-3 2 5 2-1-2-4.500h4z" fill="#fff" stroke="#777" strokeWidth=".6" />
    </Pointer>
    <Talking>Talking:&nbsp; ACCOUNTANT&nbsp; TRAINI...</Talking>
    <PenBubble aria-label="Annotate">
      <Icon width="14" height="14" viewBox="0 0 14 14" $stroke="1.300">
        <path d="M1.500 10 2 7l6.500-6L12 4l-6.500 6zM7 2.500l3 3M1.500 12.500h10" />
      </Icon>
    </PenBubble>
  </>
);

export default function App() {
  return (
    <Screen>
      <GlobalStyle />
      <TitleArea />
      <RibbonTabs />
      <HomeRibbon />
      <LicenseMessage />
      <FormulaArea />
      <Workbook />
      <SheetTabs />
      <StatusLine />
      <WindowsTaskBar />
      <MeetingOverlay />
    </Screen>
  );
}
